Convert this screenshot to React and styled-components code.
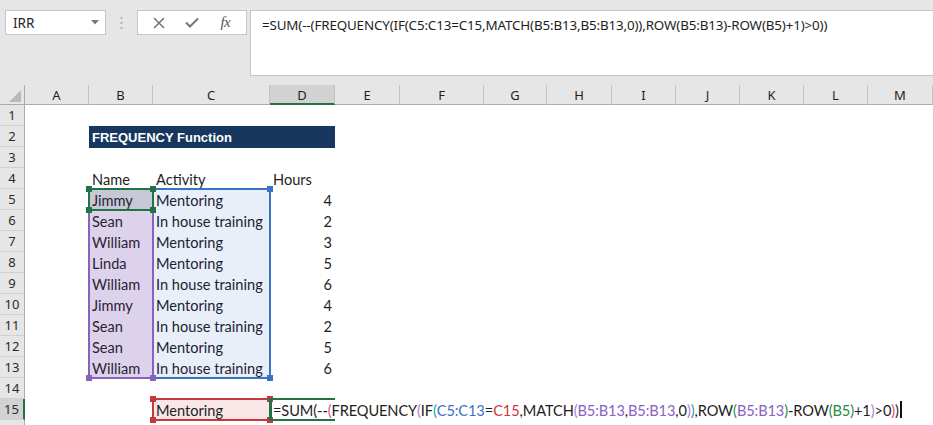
import React from "react";
import styled, { createGlobalStyle } from "styled-components";

const GlobalStyle = createGlobalStyle`
  html, body {
    margin: 0;
    padding: 0;
    background: #ffffff;
    overflow: hidden;
  }
  body {
    font-family: "Lato", "Liberation Sans", sans-serif;
  }
`;

const COLUMNS = [
  ["A", 64],
  ["B", 64],
  ["C", 117],
  ["D", 65],
  ["E", 65],
  ["F", 84],
  ["G", 63],
  ["H", 65],
  ["I", 64],
  ["J", 64],
  ["K", 64],
  ["L", 64],
  ["M", 65],
];

const ROWS = 16;

const data = [
  ["Jimmy", "Mentoring", 4],
  ["Sean", "In house training", 2],
  ["William", "Mentoring", 3],
  ["Linda", "Mentoring", 5],
  ["William", "In house training", 6],
  ["Jimmy", "Mentoring", 4],
  ["Sean", "In house training", 2],
  ["Sean", "Mentoring", 5],
  ["William", "In house training", 6],
];

const C = {
  black: "#1e1e1e",
  pink: "#e0507f",
  violet: "#b27ad6",
  teal: "#19a2a8",
  blue: "#3c70cf",
  red: "#d2343f",
  purple: "#8a62c2",
  green: "#2a8c45",
};

const formula = [
  ["=SUM(--", C.black],
  ["(", C.pink],
  ["FREQUENCY", C.black],
  ["(", C.violet],
  ["IF", C.black],
  ["(", C.teal],
  ["C5:C13", C.blue],
  ["=", C.black],
  ["C15", C.red],
  [",MATCH", C.black],
  ["(", C.violet],
  ["B5:B13", C.purple],
  [",", C.black],
  ["B5:B13", C.purple],
  [",0", C.black],
  [")", C.violet],
  [")", C.teal],
  [",ROW", C.black],
  ["(", C.green],
  ["B5:B13", C.purple],
  [")", C.green],
  ["-ROW", C.black],
  ["(", C.green],
  ["B5", C.green],
  [")", C.green],
  ["+1", C.black],
  [")", C.violet],
  [">0", C.black],
  [")", C.pink],
  [")", C.black],
];

const formulaText = formula.map((f) => f[0]).join("");

/* ---------- formula bar ---------- */

const Page = styled.div`
  width: 933px;
  height: 425px;
  display: flex;
  flex-direction: column;
  overflow: hidden;
`;

const FormulaArea = styled.div`
  height: 85px;
  flex: none;
  background: #e6e6e6;
  display: flex;
  align-items: flex-start;
  padding: 10px 0 0 5px;
  box-sizing: border-box;
`;

const NameBox = styled.div`
  width: 101px;
  height: 25px;
  box-sizing: border-box;
  background: #ffffff;
  border: 1px solid #c6c6c6;
  display: flex;
  align-items: center;
  justify-content: space-between;
  padding: 0 6px 0 7px;
  font-family: "Noto Sans", "Open Sans", sans-serif;
  font-size: 13.5px;
  color: #262626;
`;

const Dots = styled.div`
  width: 31px;
  height: 25px;
  display: flex;
  align-items: center;
  justify-content: center;
`;

const ButtonsBox = styled.div`
  width: 110px;
  height: 25px;
  box-sizing: border-box;
  background: #ffffff;
  border: 1px solid #c6c6c6;
  display: flex;
  align-items: center;
  justify-content: space-around;
  padding: 0 4px;
  margin-right: 3px;
`;

const IconSlot = styled.span`
  width: 24px;
  display: flex;
  align-items: center;
  justify-content: center;
`;

const Fx = styled.span`
  font-family: "Liberation Serif", serif;
  font-style: italic;
  font-size: 15px;
  color: #555555;
  letter-spacing: -0.5px;
`;

const FormulaInput = styled.div`
  flex: 1;
  height: 66px;
  box-sizing: border-box;
  background: #ffffff;
  border: 1px solid #c6c6c6;
  border-right: none;
  padding: 5px 11px;
  font-family: "Noto Sans", "Open Sans", sans-serif;
  font-size: 13.4px;
  letter-spacing: -0.15px;
  color: #1e1e1e;
  white-space: nowrap;
`;

/* ---------- sheet ---------- */

const Sheet = styled.div`
  display: grid;
  grid-template-columns: 25px ${COLUMNS.map((c) => c[1] + "px").join(" ")};
  grid-template-rows: 20px repeat(${ROWS}, 21px);
  background: #ffffff;
  font-size: 14.6px;
  color: ${C.black};
`;

const Corner = styled.div`
  grid-column: 1;
  grid-row: 1;
  background: #e6e6e6;
  border-right: 1px solid #ababab;
  border-bottom: 1px solid #ababab;
  box-sizing: border-box;
  display: flex;
  align-items: flex-end;
  justify-content: flex-end;
  padding: 0 3px 2px 0;
`;

const ColHeader = styled.div`
  grid-row: 1;
  grid-column: ${(p) => p.$col};
  background: ${(p) => (p.$selected ? "#d2d2d2" : "#e6e6e6")};
  border-right: 1px solid #c3c3c3;
  border-bottom: ${(p) => (p.$selected ? "2px solid #217346" : "1px solid #ababab")};
  box-sizing: border-box;
  display: flex;
  align-items: center;
  justify-content: center;
  font-family: "Noto Sans", "Open Sans", sans-serif;
  font-size: 13px;
  color: #1e1e1e;
  padding-top: ${(p) => (p.$selected ? "1px" : "0")};
`;

const RowHeader = styled.div`
  grid-column: 1;
  grid-row: ${(p) => p.$row};
  background: ${(p) => (p.$selected ? "#d2d2d2" : "#e6e6e6")};
  border-right: ${(p) => (p.$selected ? "2px solid #217346" : "1px solid #ababab")};
  border-bottom: 1px solid #d0d0d0;
  box-sizing: border-box;
  display: flex;
  align-items: center;
  justify-content: center;
  font-family: "Noto Sans", "Open Sans", sans-serif;
  font-size: 13px;
  color: #2a2a2a;
`;

const Cell = styled.div`
  grid-column: ${(p) => p.$col};
  grid-row: ${(p) => p.$row};
  z-index: 5;
  display: flex;
  align-items: flex-end;
  justify-content: ${(p) => (p.$right ? "flex-end" : "flex-start")};
  padding: 0 3px 0 3px;
  white-space: nowrap;
  line-height: 18px;
  color: ${(p) => p.$color || C.black};
`;

const Title = styled.div`
  grid-column: 3 / 6;
  grid-row: 3;
  background: #17375e;
  color: #ffffff;
  font-family: "Liberation Sans", Arial, sans-serif;
  font-weight: bold;
  font-size: 13px;
  display: flex;
  align-items: center;
  padding: 1px 3px 0;
  margin-bottom: -1px;
`;

const RangeBox = styled.div`
  grid-column: ${(p) => p.$col};
  grid-row: ${(p) => p.$row};
  z-index: ${(p) => p.$z};
  position: relative;
  margin: -1px;
  background: ${(p) => p.$fill};
  border: 2px solid ${(p) => p.$color};
`;

const Handle = styled.span`
  position: absolute;
  width: 6px;
  height: 6px;
  background: ${(p) => p.$color};
  ${(p) => (p.$top ? "top: -4px;" : "bottom: -4px;")}
  ${(p) => (p.$left ? "left: -4px;" : "right: -4px;")}
`;

const EditCell = styled.div`
  grid-column: 5;
  grid-row: 16;
  z-index: 7;
  margin: -1px 0 -1px -1px;
  border-top: 2px solid #217346;
  border-bottom: 2px solid #217346;
  border-left: 3px solid #217346;
`;

const EditText = styled.div`
  grid-column: 5 / 15;
  grid-row: 16;
  z-index: 8;
  display: flex;
  align-items: flex-end;
  padding: 0 0 0 3px;
  white-space: nowrap;
  line-height: 18px;
  letter-spacing: -0.1px;
`;

const Caret = styled.span`
  display: inline-block;
  width: 2px;
  height: 17px;
  margin-left: 1px;
  background: #111111;
  align-self: center;
`;

function Range({ col, row, color, fill, z }) {
  return (
    <RangeBox $col={col} $row={row} $color={color} $fill={fill} $z={z}>
      <Handle $color={color} $top $left />
      <Handle $color={color} $top />
      <Handle $color={color} $left />
      <Handle $color={color} />
    </RangeBox>
  );
}

export default function App() {
  return (
    <>
      <GlobalStyle />
      <Page>
        <FormulaArea>
          <NameBox>
            <span>IRR</span>
            <svg width="8" height="5" viewBox="0 0 8 5">
              <path d="M0 0 L8 0 L4 4.5 Z" fill="#7a7a7a" />
            </svg>
          </NameBox>
          <Dots>
            <svg width="3" height="12" viewBox="0 0 3 12">
              <rect x="0.5" y="0" width="2" height="2" fill="#b4b4b4" />
              <rect x="0.5" y="5" width="2" height="2" fill="#b4b4b4" />
              <rect x="0.5" y="10" width="2" height="2" fill="#b4b4b4" />
            </svg>
          </Dots>
          <ButtonsBox>
            <IconSlot>
              <svg width="12" height="12" viewBox="0 0 12 12">
                <path d="M1 1 L11 11 M11 1 L1 11" stroke="#767676" strokeWidth="1.6" />
              </svg>
            </IconSlot>
            <IconSlot>
              <svg width="14" height="11" viewBox="0 0 14 11">
                <path d="M1 5.5 L5 9.5 L13 1.5" stroke="#767676" strokeWidth="2" fill="none" />
              </svg>
            </IconSlot>
            <IconSlot>
              <Fx>fx</Fx>
            </IconSlot>
          </ButtonsBox>
          <FormulaInput>{formulaText}</FormulaInput>
        </FormulaArea>

        <Sheet>
          <Corner>
            <svg width="12" height="12" viewBox="0 0 12 12">
              <path d="M12 0 L12 12 L0 12 Z" fill="#b9b9b9" />
            </svg>
          </Corner>
          {COLUMNS.map(([name], i) => (
            <ColHeader key={name} $col={i + 2} $selected={name === "D"}>
              {name}
            </ColHeader>
          ))}
          {Array.from({ length: ROWS }, (_, i) => (
            <RowHeader key={i} $row={i + 2} $selected={i + 1 === 15}>
              {i + 1 < ROWS ? i + 1 : ""}
            </RowHeader>
          ))}

          <Title>FREQUENCY Function</Title>

          <Cell $col={3} $row={5}>Name</Cell>
          <Cell $col={4} $row={5}>Activity</Cell>
          <Cell $col={5} $row={5}>Hours</Cell>

          <Range col="4" row="6 / 15" color="#3a72c8" fill="#e9eff9" z={1} />
          <Range col="3" row="6 / 15" color="#8763bb" fill="#dcd2ec" z={2} />
          <Range col="3" row="6" color="#217346" fill="#c6c8d6" z={3} />
          <Range col="4" row="16" color="#c23a40" fill="#f9e7e8" z={3} />

          {data.map(([name, activity, hours], i) => (
            <React.Fragment key={i}>
              <Cell $col={3} $row={i + 6} $color="#2b2233">
                {name}
              </Cell>
              <Cell $col={4} $row={i + 6} $color="#1d2233">
                {activity}
              </Cell>
              <Cell $col={5} $row={i + 6} $right>
                {hours}
              </Cell>
            </React.Fragment>
          ))}

          <Cell $col={4} $row={16}>Mentoring</Cell>

          <EditCell />
          <EditText>
            {formula.map(([text, color], i) => (
              <span key={i} style={{ color }}>
                {text}
              </span>
            ))}
            <Caret />
          </EditText>
        </Sheet>
      </Page>
    </>
  );
}
